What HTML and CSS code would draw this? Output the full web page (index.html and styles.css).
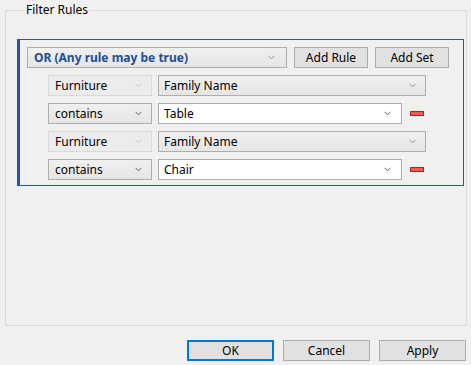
FILE: index.html
```html
<!DOCTYPE html>
<html>
<head>
<meta charset="utf-8">
<link rel="stylesheet" href="styles.css">
</head>
<body>
<div class="dialog">
  <fieldset class="group">
    <legend class="group-title">Filter Rules</legend>
    <div class="ruleset">
      <div class="row top-row">
        <div class="combo combo-or">
          <span class="or-text">OR (Any rule may be true)</span>
          <svg class="chev" width="7" height="5" viewBox="0 0 7 5"><path d="M0.5 0.8 L3.5 3.8 L6.5 0.8" fill="none" stroke="#8a8a8a" stroke-width="1"/></svg>
        </div>
        <button class="btn btn-small">Add Rule</button>
        <button class="btn btn-small">Add Set</button>
      </div>

      <div class="row rule-row">
        <div class="combo combo-cat disabled">
          <span>Furniture</span>
          <svg class="chev" width="7" height="5" viewBox="0 0 7 5"><path d="M0.5 0.8 L3.5 3.8 L6.5 0.8" fill="none" stroke="#c8c8c8" stroke-width="1"/></svg>
        </div>
        <div class="combo combo-param">
          <span>Family Name</span>
          <svg class="chev" width="7" height="5" viewBox="0 0 7 5"><path d="M0.5 0.8 L3.5 3.8 L6.5 0.8" fill="none" stroke="#8a8a8a" stroke-width="1"/></svg>
        </div>
      </div>
      <div class="row rule-row">
        <div class="combo combo-cat">
          <span>contains</span>
          <svg class="chev" width="7" height="5" viewBox="0 0 7 5"><path d="M0.5 0.8 L3.5 3.8 L6.5 0.8" fill="none" stroke="#606060" stroke-width="1"/></svg>
        </div>
        <div class="combo combo-value">
          <span>Table</span>
          <svg class="chev" width="7" height="5" viewBox="0 0 7 5"><path d="M0.5 0.8 L3.5 3.8 L6.5 0.8" fill="none" stroke="#606060" stroke-width="1"/></svg>
        </div>
        <span class="remove"></span>
      </div>

      <div class="row rule-row">
        <div class="combo combo-cat disabled">
          <span>Furniture</span>
          <svg class="chev" width="7" height="5" viewBox="0 0 7 5"><path d="M0.5 0.8 L3.5 3.8 L6.5 0.8" fill="none" stroke="#c8c8c8" stroke-width="1"/></svg>
        </div>
        <div class="combo combo-param">
          <span>Family Name</span>
          <svg class="chev" width="7" height="5" viewBox="0 0 7 5"><path d="M0.5 0.8 L3.5 3.8 L6.5 0.8" fill="none" stroke="#8a8a8a" stroke-width="1"/></svg>
        </div>
      </div>
      <div class="row rule-row">
        <div class="combo combo-cat">
          <span>contains</span>
          <svg class="chev" width="7" height="5" viewBox="0 0 7 5"><path d="M0.5 0.8 L3.5 3.8 L6.5 0.8" fill="none" stroke="#606060" stroke-width="1"/></svg>
        </div>
        <div class="combo combo-value">
          <span>Chair</span>
          <svg class="chev" width="7" height="5" viewBox="0 0 7 5"><path d="M0.5 0.8 L3.5 3.8 L6.5 0.8" fill="none" stroke="#606060" stroke-width="1"/></svg>
        </div>
        <span class="remove"></span>
      </div>
    </div>
  </fieldset>

  <div class="footer">
    <button class="btn btn-dlg btn-default">OK</button>
    <button class="btn btn-dlg">Cancel</button>
    <button class="btn btn-dlg">Apply</button>
  </div>
</div>
</body>
</html>
```

FILE: styles.css
```css
html, body {
  margin: 0;
  padding: 0;
  background: #f0f0f0;
}
body {
  font-family: "Noto Sans", "Open Sans", sans-serif;
  font-size: 12px;
  color: #000;
  width: 471px;
  height: 365px;
  overflow: hidden;
}
.dialog {
  padding-top: 2px;
}
.group {
  margin: 0 0 0 5px;
  padding: 0 0 0 11px;
  width: 449px;
  height: 322px;
  border: 1px solid #dcdcdc;
  box-sizing: content-box;
  min-width: 0;
}
.group-title {
  margin-left: 8px;
  padding: 0 1px;
  line-height: 16px;
  font-size: 12px;
  color: #000;
}
.ruleset {
  margin-top: 21px;
  width: 429px;
  border: 1px solid #2a5597;
  border-left: 3px solid #2a5597;
  padding: 7px 7px 5px 7px;
  display: flex;
  flex-direction: column;
  gap: 7px;
}
.row {
  display: flex;
  align-items: center;
  height: 21px;
}
.top-row {
  gap: 7px;
}
.rule-row {
  padding-left: 21px;
  gap: 6px;
}
.combo {
  box-sizing: border-box;
  height: 21px;
  display: flex;
  align-items: center;
  justify-content: space-between;
  padding: 0 9px 0 5px;
  border: 1px solid #adadad;
  background: linear-gradient(#f0f0f0, #e5e5e5);
  line-height: 19px;
  white-space: nowrap;
}
.combo .chev {
  flex: none;
}
.combo-or {
  width: 260px;
  padding-left: 6px;
  padding-right: 11px;
}
.or-text {
  color: #1f4e96;
  font-weight: bold;
}
.combo-cat {
  width: 104px;
  padding-left: 6px;
}
.combo-cat.disabled {
  border-color: #d9d9d9;
  background: #ececec;
}
.combo-param {
  width: 268px;
}
.combo-value {
  width: 244px;
  background: #fff;
  padding-right: 10px;
}
.remove {
  display: block;
  width: 14px;
  height: 5px;
  box-sizing: border-box;
  margin-left: 2px;
  background: #ec5b5b;
  border: 1px solid #b32424;
}
.btn {
  box-sizing: border-box;
  font-family: inherit;
  font-size: 12px;
  color: #000;
  background: #e1e1e1;
  border: 1px solid #adadad;
  padding: 0;
  margin: 0;
  height: 21px;
  line-height: 19px;
}
.btn-small {
  width: 74px;
}
.footer {
  display: flex;
  justify-content: flex-end;
  gap: 9px;
  padding-right: 5px;
  margin-top: 14px;
}
.btn-dlg {
  width: 87px;
}
.btn-default {
  border: 2px solid #0078d7;
  line-height: 17px;
}
```
